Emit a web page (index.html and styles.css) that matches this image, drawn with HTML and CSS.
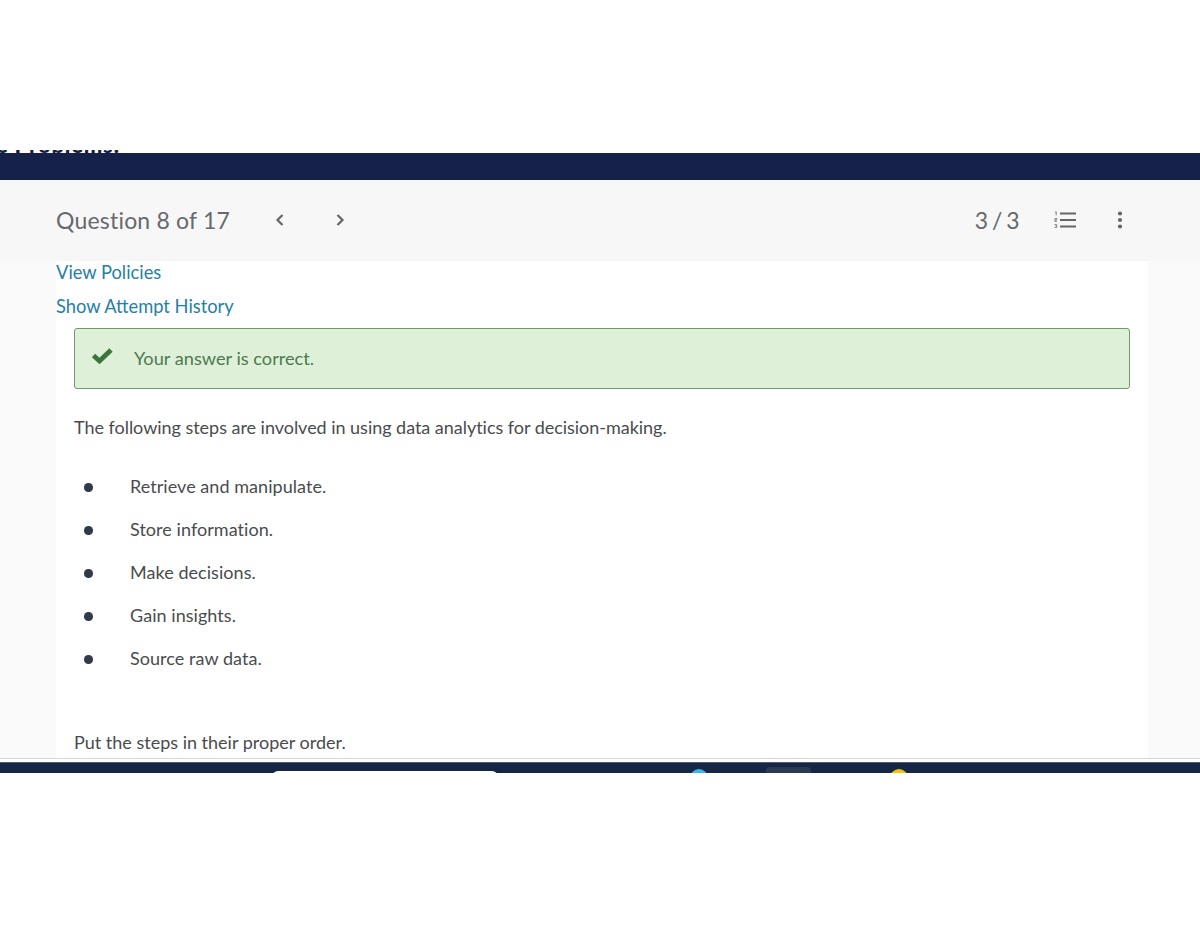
FILE: index.html
```html
<!DOCTYPE html>
<html lang="en">
<head>
<meta charset="utf-8">
<title>Question 8 of 17</title>
<link rel="stylesheet" href="styles.css">
</head>
<body>
<div class="shot">
  <div class="clip-title"><span>e Problems.</span></div>
  <div class="topbar"></div>
  <div class="qhead">
    <div class="qtitle">Question 8 of 17</div>
    <svg class="chev first" width="12" height="14" viewBox="0 0 12 14"><path d="M8.500 2 3.500 7l5 5" fill="none" stroke="#666" stroke-width="2.200"/></svg>
    <svg class="chev" width="12" height="14" viewBox="0 0 12 14"><path d="M3.500 2l5 5-5 5" fill="none" stroke="#666" stroke-width="2.200"/></svg>
    <div class="score">3 / 3</div>
    <svg class="listicon" width="22" height="18" viewBox="0 0 22 18">
      <path d="M6 2.500h16M6 9h16M6 15.500h16" stroke="#666" stroke-width="2" fill="none"/>
      <path d="M1 1.500l1.200-.8v3.600M.5 7.500h2.200v1.300H.8v1.500h2.200M.5 13.700h2.300l-1 1.200h1v1.500H.5" stroke="#666" stroke-width=".8" fill="none"/>
    </svg>
    <svg class="dots" width="6" height="18" viewBox="0 0 6 18"><circle cx="3" cy="2.500" r="2.100"/><circle cx="3" cy="9" r="2.100"/><circle cx="3" cy="15.500" r="2.100"/></svg>
  </div>
  <div class="side">
    <main class="content">
      <a class="link first-link">View Policies</a>
      <a class="link">Show Attempt History</a>
      <div class="alert">
        <svg class="check" width="22" height="17" viewBox="0 0 22 17"><path d="M2.500 8.500l6 5.500L20 3" fill="none" stroke="#3c763d" stroke-width="4.800"/></svg>
        <span>Your answer is correct.</span>
      </div>
      <p class="intro">The following steps are involved in using data analytics for decision-making.</p>
      <ul class="steps">
        <li>Retrieve and manipulate.</li>
        <li>Store information.</li>
        <li>Make decisions.</li>
        <li>Gain insights.</li>
        <li>Source raw data.</li>
      </ul>
      <p class="order">Put the steps in their proper order.</p>
    </main>
  </div>
  <div class="rule"></div>
  <div class="taskbar">
    <div class="pill"></div>
    <div class="blue"></div>
    <div class="tab"></div>
    <div class="yellow"></div>
  </div>
</div>
</body>
</html>
```
FILE: styles.css
```css
* { box-sizing: border-box; }
html, body { margin: 0; background: #fff; }
body { font-family: Lato, "Liberation Sans", sans-serif; color: #494c4e; height: 927px; overflow: hidden; }
.shot { padding-top: 150px; }
.clip-title { height: 3px; overflow: hidden; }
.clip-title span { display: block; font-size: 22px; font-weight: 900; line-height: 10px; color: #16213f; margin-top: -10px; letter-spacing: .8px; margin-left: -4px; white-space: nowrap; }
.topbar { height: 27px; background: #152148; }
.qhead { height: 81px; background: #f7f7f7; display: flex; align-items: center; padding: 0 0 2px 56px; color: #666a6c; }
.qtitle { font-size: 23px; width: 218px; letter-spacing: .2px; }
.chev { flex: none; margin-right: 48px; }
.score { font-size: 23px; margin-left: auto; margin-right: 34px; word-spacing: -2.500px; letter-spacing: .3px; }
.listicon { flex: none; margin-right: 41px; }
.dots { flex: none; margin-right: 77px; fill: #666; }
.side { background: #fafafa; height: 497px; padding: 0 52px 0 56px; }
.content { background: #fff; height: 497px; overflow: hidden; }
.link { display: block; color: #2580a8; font-size: 18.300px; line-height: 34px; }
.first-link { margin-top: -6px; }
.alert { margin: 5px 18px 0; height: 61px; background: #dff0d8; border: 1px solid #6d9b70; border-radius: 3px; display: flex; align-items: center; color: #4d7a50; font-size: 18.200px; padding-left: 16px; }
.alert span { margin-left: 21px; margin-top: -1px; }
.check { flex: none; margin-top: -6px; }
.intro { margin: 25px 0 0 18px; font-size: 18px; line-height: 26px; letter-spacing: -.03px; }
.steps { list-style: none; margin: 33px 0 0; padding: 0 0 0 74px; }
.steps li { font-size: 18px; line-height: 26px; margin-bottom: 17px; position: relative; letter-spacing: .05px; }
.steps li::before { content: ""; position: absolute; left: -46px; top: 10px; width: 8.500px; height: 8.500px; border-radius: 50%; background: #2f3a4a; }
.order { margin: 58px 0 0 18px; font-size: 18px; line-height: 26px; }
.rule { height: 4px; background: #fff; border-top: 1px solid #d6d6d6; }
.taskbar { height: 11px; background: #152744; border-top: 1px solid #555e6e; display: flex; overflow: hidden; }
.pill { width: 226px; height: 6px; margin: 8px 0 0 272px; background: #fff; border-radius: 6px 6px 0 0; }
.blue { width: 18px; height: 18px; margin: 6px 0 0 192px; background: #3db4f2; border-radius: 50%; flex: none; }
.tab { width: 45px; height: 12px; margin: 4px 0 0 58px; background: #2a3a55; border-radius: 4px 4px 0 0; }
.yellow { width: 18px; height: 18px; margin: 6px 0 0 79px; background: #f4c20d; border-radius: 50%; flex: none; }
```
